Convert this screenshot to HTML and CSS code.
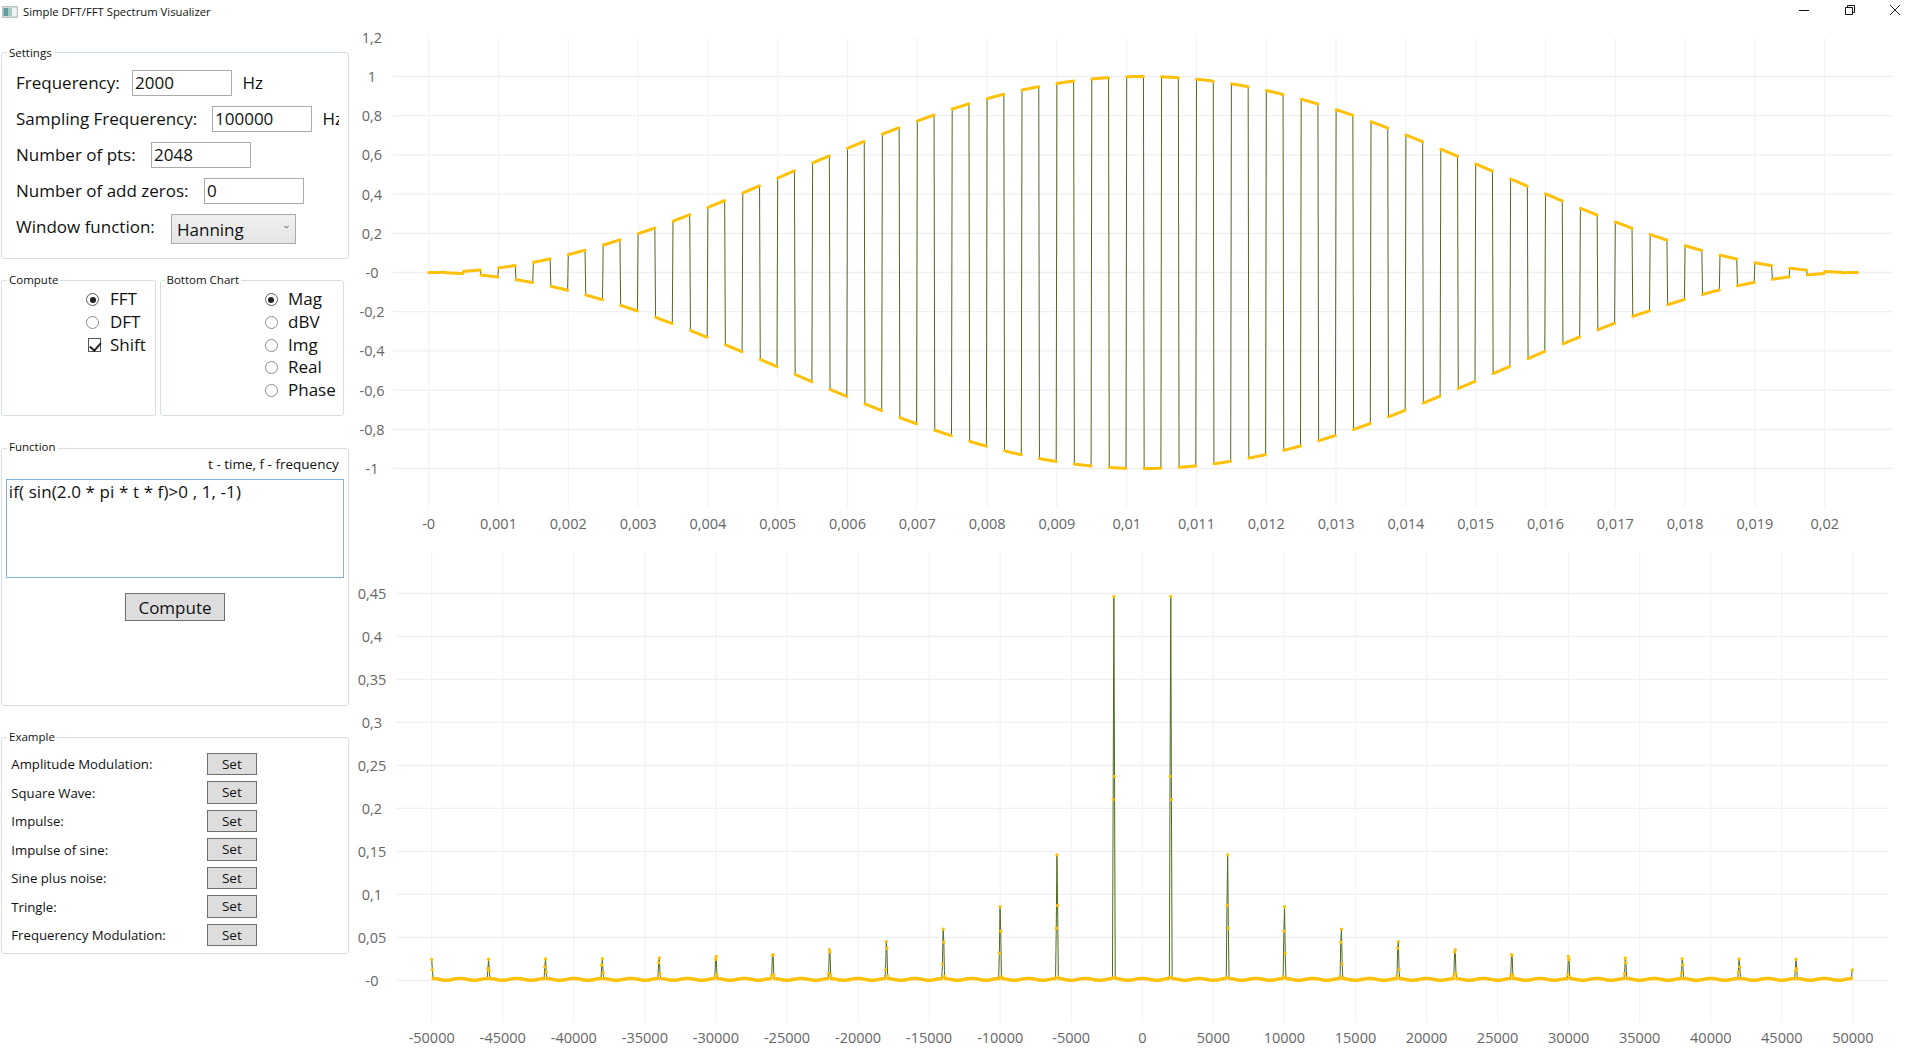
FILE: index.html
```html
<!DOCTYPE html>
<html lang="en">
<head>
<meta charset="utf-8">
<title>Simple DFT/FFT Spectrum Visualizer</title>
<link rel="stylesheet" href="styles.css">
</head>
<body>
<div class="window">
  <header class="titlebar">
    <svg class="app-icon" width="16" height="12" viewBox="0 0 16 12">
      <rect x="0.5" y="0.5" width="15" height="11" fill="#d3d8d8" stroke="#bcc3c3"/>
      <rect x="1.5" y="2" width="4.5" height="8" fill="#5f9ea0"/>
      <rect x="6" y="2" width="4" height="8" fill="#a9c9c0"/>
      <rect x="10" y="2" width="4.5" height="8" fill="#eef2f2"/>
    </svg>
    <span class="title">Simple DFT/FFT Spectrum Visualizer</span>
    <div class="controls">
      <button class="ctl" aria-label="Minimize"><svg width="10" height="10" viewBox="0 0 10 10"><path d="M0 5.5H10" stroke="#111" fill="none"/></svg></button>
      <button class="ctl" aria-label="Restore"><svg width="10" height="10" viewBox="0 0 10 10"><path d="M.5 2.5H7.5V9.5H.5ZM2.5 2.5V.5H9.5V7.5H7.5" stroke="#111" fill="none"/></svg></button>
      <button class="ctl" aria-label="Close"><svg width="10" height="10" viewBox="0 0 10 10"><path d="M0 0L10 10M10 0L0 10" stroke="#111" stroke-width="0.9" fill="none"/></svg></button>
    </div>
  </header>
  <main class="body">
    <aside class="side">
      <section class="group settings">
        <span class="legend">Settings</span>
        <div class="row"><label class="lbl l-freq">Frequerency:</label><input class="field" value="2000"><span class="unit">Hz</span></div>
        <div class="row"><label class="lbl l-samp">Sampling Frequerency:</label><input class="field" value="100000"><span class="unit">Hz</span></div>
        <div class="row"><label class="lbl l-pts">Number of pts:</label><input class="field" value="2048"></div>
        <div class="row"><label class="lbl l-zero">Number of add zeros:</label><input class="field" value="0"></div>
        <div class="row row-win"><label class="lbl l-win">Window function:</label>
          <div class="combo"><span>Hanning</span><svg width="5" height="4" viewBox="0 0 5 4"><path d="M.3 .8L2.5 3L4.7 .8" stroke="#555" fill="none"/></svg></div>
        </div>
      </section>
      <div class="pair">
        <section class="group compute">
          <span class="legend">Compute</span>
          <label class="opt"><input type="radio" name="algo" checked>FFT</label>
          <label class="opt"><input type="radio" name="algo">DFT</label>
          <label class="opt"><input type="checkbox" checked>Shift</label>
        </section>
        <section class="group bottom">
          <span class="legend">Bottom Chart</span>
          <label class="opt"><input type="radio" name="view" checked>Mag</label>
          <label class="opt"><input type="radio" name="view">dBV</label>
          <label class="opt"><input type="radio" name="view">Img</label>
          <label class="opt"><input type="radio" name="view">Real</label>
          <label class="opt"><input type="radio" name="view">Phase</label>
        </section>
      </div>
      <section class="group function">
        <span class="legend">Function</span>
        <div class="hint">t - time, f - frequency</div>
        <textarea class="formula" spellcheck="false">if( sin(2.0 * pi * t * f)&gt;0 , 1, -1)</textarea>
        <button class="btn btn-compute">Compute</button>
      </section>
      <section class="group example">
        <span class="legend">Example</span>
        <div class="ex"><span class="ex-name">Amplitude Modulation:</span><button class="btn btn-set">Set</button></div>
        <div class="ex"><span class="ex-name">Square Wave:</span><button class="btn btn-set">Set</button></div>
        <div class="ex"><span class="ex-name">Impulse:</span><button class="btn btn-set">Set</button></div>
        <div class="ex"><span class="ex-name">Impulse of sine:</span><button class="btn btn-set">Set</button></div>
        <div class="ex"><span class="ex-name">Sine plus noise:</span><button class="btn btn-set">Set</button></div>
        <div class="ex"><span class="ex-name">Tringle:</span><button class="btn btn-set">Set</button></div>
        <div class="ex"><span class="ex-name">Frequerency Modulation:</span><button class="btn btn-set">Set</button></div>
      </section>
    </aside>
    <div class="charts">
      <svg id="time" class="chart" viewBox="352 30 1568 510">
        <g class="grid"></g>
        <g class="series"></g>
        <g class="ticks yt">
          <text x="372" y="43.2">1,2</text><text x="372" y="82">1</text><text x="372" y="121.2">0,8</text><text x="372" y="160.4">0,6</text><text x="372" y="199.6">0,4</text><text x="372" y="238.8">0,2</text><text x="372" y="278">-0</text><text x="372" y="317.2">-0,2</text><text x="372" y="356.4">-0,4</text><text x="372" y="395.6">-0,6</text><text x="372" y="434.8">-0,8</text><text x="372" y="474">-1</text>
        </g>
        <g class="ticks xt">
          <text x="428.7" y="528.7">-0</text><text x="498.5" y="528.7">0,001</text><text x="568.3" y="528.7">0,002</text><text x="638.1" y="528.7">0,003</text><text x="707.9" y="528.7">0,004</text><text x="777.7" y="528.7">0,005</text><text x="847.5" y="528.7">0,006</text><text x="917.3" y="528.7">0,007</text><text x="987.1" y="528.7">0,008</text><text x="1056.9" y="528.7">0,009</text><text x="1126.7" y="528.7">0,01</text><text x="1196.5" y="528.7">0,011</text><text x="1266.3" y="528.7">0,012</text><text x="1336.1" y="528.7">0,013</text><text x="1405.9" y="528.7">0,014</text><text x="1475.7" y="528.7">0,015</text><text x="1545.5" y="528.7">0,016</text><text x="1615.3" y="528.7">0,017</text><text x="1685.1" y="528.7">0,018</text><text x="1754.9" y="528.7">0,019</text><text x="1824.7" y="528.7">0,02</text>
        </g>
      </svg>
      <svg id="spectrum" class="chart" viewBox="352 540 1568 510">
        <g class="grid"></g>
        <g class="series"></g>
        <g class="ticks yt">
          <text x="372" y="598.8">0,45</text><text x="372" y="641.8">0,4</text><text x="372" y="684.8">0,35</text><text x="372" y="727.8">0,3</text><text x="372" y="770.8">0,25</text><text x="372" y="813.8">0,2</text><text x="372" y="856.8">0,15</text><text x="372" y="899.8">0,1</text><text x="372" y="942.8">0,05</text><text x="372" y="985.8">-0</text>
        </g>
        <g class="ticks xt">
          <text x="431.7" y="1043">-50000</text><text x="502.8" y="1043">-45000</text><text x="573.8" y="1043">-40000</text><text x="644.9" y="1043">-35000</text><text x="715.9" y="1043">-30000</text><text x="787" y="1043">-25000</text><text x="858.1" y="1043">-20000</text><text x="929.1" y="1043">-15000</text><text x="1000.2" y="1043">-10000</text><text x="1071.2" y="1043">-5000</text><text x="1142.3" y="1043">0</text><text x="1213.4" y="1043">5000</text><text x="1284.4" y="1043">10000</text><text x="1355.5" y="1043">15000</text><text x="1426.5" y="1043">20000</text><text x="1497.6" y="1043">25000</text><text x="1568.7" y="1043">30000</text><text x="1639.7" y="1043">35000</text><text x="1710.8" y="1043">40000</text><text x="1781.8" y="1043">45000</text><text x="1852.9" y="1043">50000</text>
        </g>
      </svg>
    </div>
  </main>
</div>
<script src="chart.js"></script>
</body>
</html>
```
FILE: styles.css
```css
* { box-sizing: border-box; }
html, body { margin: 0; padding: 0; background: #fff; }
body { font-family: "Open Sans", "Noto Sans", sans-serif; color: #111; overflow: hidden; }
.window { width: 1920px; height: 1050px; display: flex; flex-direction: column; overflow: hidden; }

.titlebar { height: 30px; flex: none; display: flex; align-items: center; padding: 0 2px 7px 2px; }
.app-icon { flex: none; margin-right: 5px; }
.title { font-size: 11.3px; color: #111; }
.controls { margin-left: auto; display: flex; align-self: flex-start; }
.ctl { width: 45.5px; height: 20px; padding: 0; border: 0; background: none; display: flex; align-items: center; justify-content: center; }

.body { flex: 1; display: flex; min-height: 0; }
.side { width: 352px; flex: none; padding: 22px 0 0 1px; }
.charts { flex: 1; display: flex; flex-direction: column; }
.chart { display: block; width: 1568px; height: 510px; overflow: visible; }

.group { position: relative; border: 1px solid #d5dfe5; border-radius: 3px; background: #fff; }
.legend { position: absolute; top: -9px; left: 5px; padding: 0 2px; background: #fff; font-size: 11.5px; line-height: 16px; color: #111; white-space: nowrap; }
.settings .legend { top: -8px; }
.function .legend { top: -10px; }
.bottom .legend { left: 4px; }

.settings { width: 347.5px; height: 207px; padding: 17px 0 0 14px; display: flex; flex-direction: column; gap: 10px; }
.row { display: flex; align-items: center; width: 323px; overflow: hidden; height: 26px; font-size: 17px; }
.row-win { height: 30px; }
.row-win .lbl { margin-bottom: 4px; }
.lbl { flex: none; white-space: nowrap; padding-bottom: 2px; }
.l-freq { width: 116px; }
.l-samp { width: 196px; }
.l-pts { width: 135px; }
.l-zero { width: 188px; }
.l-win { width: 155px; }
.field { flex: none; width: 100px; height: 26px; border: 1px solid #ababab; padding: 0 2px 2px; font: inherit; color: #111; background: #fff; outline: 0; }
.unit { flex: none; margin-left: 10.5px; padding-bottom: 2px; }
.combo { flex: none; width: 125px; height: 30px; border: 1px solid #acacac; background: linear-gradient(#f0f0f0, #e5e5e5); display: flex; align-items: center; justify-content: space-between; padding: 0 6.5px 0 5px; }
.combo svg { margin-top: -4px; }

.pair { display: flex; gap: 3.5px; margin-top: 21px; }
.compute, .bottom { height: 136px; padding-top: 7.5px; }
.compute { width: 155px; padding-left: 84px; }
.bottom { width: 184px; padding-left: 104px; }
.opt { display: flex; align-items: center; height: 22.7px; padding-bottom: 1px; font-size: 17px; line-height: 20px; white-space: nowrap; }
.opt input { appearance: none; -webkit-appearance: none; flex: none; margin: 1px 11px 0 0; width: 13px; height: 13px; border: 1px solid #8a8a8a; background: #fff; position: relative; }
.bottom .opt input { margin-right: 10.5px; }
.opt input[type=radio] { border-radius: 50%; }
.opt input[type=radio]:checked { border-color: #5a5a5a; }
.opt input[type=radio]:checked::after { content: ""; position: absolute; left: 2.5px; top: 2.5px; width: 6px; height: 6px; border-radius: 50%; background: #222; }
.opt input[type=checkbox] { margin: 1px 9px 0 1.5px; width: 13.5px; height: 13.5px; border-color: #555; }
.opt input[type=checkbox]:checked::after { content: ""; position: absolute; left: 3.4px; top: 0.3px; width: 4.8px; height: 8.8px; border: solid #222; border-width: 0 2px 2px 0; transform: rotate(42deg); }

.function { width: 347.5px; height: 257.5px; margin-top: 32px; padding: 5.5px 3.8px 0 4.3px; display: flex; flex-direction: column; }
.hint { text-align: right; height: 20px; line-height: 18px; font-size: 13.5px; padding-right: 5px; }
.formula { display: block; width: 100%; height: 99px; margin-top: 4.4px; border: 1px solid #7eb4ea; padding: 0 1.5px; font: 17px/24px "Open Sans", sans-serif; letter-spacing: 0.1px; color: #111; resize: none; outline: 0; overflow: hidden; }
.btn { padding: 0; border: 1px solid #707070; background: #ddd; color: #111; font-family: inherit; }
.btn-compute { align-self: center; width: 99.5px; height: 27.5px; margin-top: 15.6px; font-size: 17px; }

.example { width: 347.5px; height: 217px; margin-top: 31.5px; padding: 14.8px 0 0 9.3px; display: flex; flex-direction: column; gap: 6.1px; }
.ex { display: flex; align-items: center; height: 22.4px; font-size: 13.2px; }
.ex-name { width: 195.7px; flex: none; white-space: nowrap; padding-top: 0.4px; }
.btn-set { width: 49.7px; height: 22.4px; font-size: 13.5px; }

.ticks text { font-family: "Open Sans", sans-serif; font-size: 14.5px; fill: #666; text-anchor: middle; }
```
FILE: chart.js
```js
var SVGNS = "http://www.w3.org/2000/svg";
var N = 2048, FS = 100000, HALF_PERIOD = 25;

function signal() {
  var out = [];
  for (var n = 0; n < N; n++) {
    var s = Math.floor(n / HALF_PERIOD) % 2 === 0 ? 1 : -1;
    var w = 0.5 * (1 - Math.cos(2 * Math.PI * n / (N - 1)));
    out.push(s * w);
  }
  return out;
}

function fftMag(x) {
  var re = x.slice(), im = x.map(function () { return 0; });
  for (var i = 1, j = 0; i < N; i++) {
    var b = N >> 1;
    for (; j & b; b >>= 1) j ^= b;
    j ^= b;
    if (i < j) { var tmp = re[i]; re[i] = re[j]; re[j] = tmp; }
  }
  for (var len = 2; len <= N; len <<= 1) {
    var ang = -2 * Math.PI / len;
    for (var s = 0; s < N; s += len) {
      for (var k = 0; k < len / 2; k++) {
        var c = Math.cos(ang * k), d = Math.sin(ang * k);
        var p = s + k, q = p + len / 2;
        var a = re[q] * c - im[q] * d, e = re[q] * d + im[q] * c;
        re[q] = re[p] - a; im[q] = im[p] - e;
        re[p] += a; im[p] += e;
      }
    }
  }
  return re.map(function (r, i) { return Math.sqrt(r * r + im[i] * im[i]); });
}

function el(parent, name, attrs) {
  var node = document.createElementNS(SVGNS, name);
  for (var key in attrs) node.setAttribute(key, attrs[key]);
  parent.appendChild(node);
}

function grid(svg, hs, vs, x0, x1, y0, y1) {
  var g = svg.querySelector(".grid");
  hs.forEach(function (y) { el(g, "line", { x1: x0, x2: x1, y1: y, y2: y, stroke: "#f0f0f0", "stroke-width": 1.3 }); });
  vs.forEach(function (x) { el(g, "line", { x1: x, x2: x, y1: y0, y2: y1, stroke: "#f3f3f3", "stroke-width": 1.2 }); });
}

function series(svg, pts, dot) {
  var g = svg.querySelector(".series");
  var line = "", dots = "";
  pts.forEach(function (p, i) {
    var c = p[0].toFixed(2) + " " + p[1].toFixed(2);
    line += (i ? "L" : "M") + c;
    dots += "M" + c + "h0";
  });
  el(g, "path", { d: line, fill: "none", stroke: "#4f6b1f", "stroke-width": 1 });
  el(g, "path", { d: dots, fill: "none", stroke: "#ffc107", "stroke-width": dot, "stroke-linecap": "round" });
}

function range(n, fn) {
  var a = [];
  for (var i = 0; i < n; i++) a.push(fn(i));
  return a;
}

var time = document.getElementById("time");
var spec = document.getElementById("spectrum");
var x = signal();

grid(time, range(11, function (i) { return 76.5 + 39.2 * i; }), range(21, function (i) { return 428.7 + 69.8 * i; }), 393, 1893, 38, 507);
grid(spec, range(10, function (i) { return 593.3 + 43 * i; }), range(21, function (i) { return 431.7 + 71.06 * i; }), 396, 1888, 552, 1023);

series(time, x.map(function (v, n) { return [428.7 + (n / FS) * 69800, 272.5 - v * 196]; }), 3);

var mag = fftMag(x);
var peak = Math.max.apply(null, mag);
var pts = [];
for (var k = 0; k < N; k++) {
  var idx = (k + N / 2) % N;
  var f = (k - N / 2) * FS / N;
  var c = Math.cos(Math.PI * f / 2000);
  var taper = 1 - 0.14 * Math.min(1, Math.abs(f) / 34000);
  var v = Math.max((mag[idx] / peak) * 0.45 * taper, 0.0022 * c * c);
  pts.push([1142.3 + f * 71.06 / 5000, 980.3 - v * 860]);
}
series(spec, pts, 3.4);
```
